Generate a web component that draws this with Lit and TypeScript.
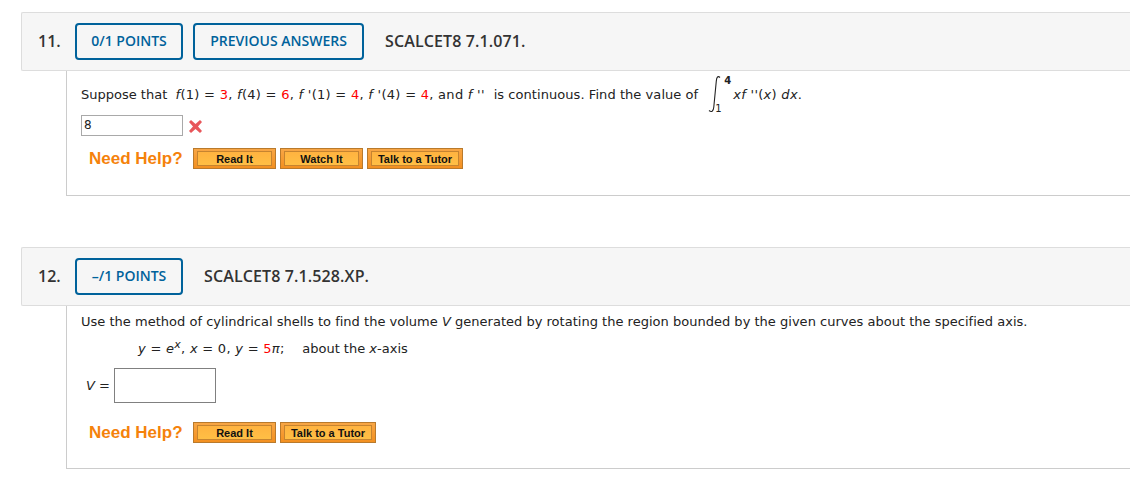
import { LitElement, html, css } from "lit";
import { customElement } from "lit/decorators.js";

const helpBtn = (t: string, w: number) =>
  html`<span class="btn" style="width:${w}px"><span class="btn-in">${t}</span></span>`;

@customElement("app-root")
export class AppRoot extends LitElement {
  static styles = css`
    :host { display: block; width: 1130px; height: 493px; overflow: hidden; background: #fff; font-family: "DejaVu Sans", Verdana, sans-serif; font-size: 13px; color: #222; }
    .page { padding: 12px 0 0 21px; display: flex; flex-direction: column; gap: 51px; }
    .head { height: 59px; box-sizing: border-box; border: 1px solid #ddd; border-right: 0; border-radius: 2px 0 0 2px; background: #f6f6f6; display: flex; align-items: center; font-family: "Open Sans", sans-serif; padding-left: 16px; }
    .num { width: 37px; font-size: 16px; font-weight: 600; color: #333; padding-bottom: 2px; }
    .pill { height: 37px; box-sizing: border-box; border: 2px solid #00629b; border-radius: 4px; display: flex; align-items: center; justify-content: center; color: #00629b; font-size: 14px; font-weight: 600; margin-right: 10px; white-space: nowrap; padding-bottom: 2px; }
    .title { margin-left: 11px; font-size: 16px; font-weight: 600; color: #333; white-space: nowrap; letter-spacing: .12px; padding-bottom: 2px; }
    .body { margin-left: 45px; border-left: 1px solid #ccc; border-bottom: 1px solid #ccc; padding-left: 14px; box-sizing: border-box; }
    .b1 { height: 125px; }
    .b2 { height: 163px; }
    .line { white-space: pre; display: flex; align-items: center; }
    .m { letter-spacing: .28px; }
    .cont { letter-spacing: .06px; }
    i { font-style: italic; }
    .r { color: #f00; }
    .sup { font-size: 11px; position: relative; top: -5px; }
    .int { position: relative; width: 26px; height: 38px; margin-left: 9px; flex: none; }
    .int svg { position: absolute; left: 0; top: 0; }
    .lim { position: absolute; font-size: 10px; font-weight: 700; line-height: 10px; color: #222; }
    .ans { display: flex; align-items: center; }
    .input { box-sizing: border-box; width: 102px; height: 21px; border: 1px solid #a9a9a9; background: #fff; font-size: 12px; line-height: 18px; padding-left: 2px; }
    .x { margin: 2px 0 0 5px; display: block; }
    .help { display: flex; align-items: center; padding-left: 8px; }
    .need { font-family: "Liberation Sans", Arial, sans-serif; font-weight: 700; font-size: 17px; color: #f5820b; width: 104px; white-space: nowrap; }
    .btn { height: 21px; box-sizing: border-box; border: 1px solid #b97a2c; background: linear-gradient(#f8a645, #f39020); padding: 2px 3px; display: block; margin-right: 4px; }
    .btn-in { display: flex; height: 15px; align-items: center; justify-content: center; box-sizing: border-box; border: 1px solid #c68430; background: linear-gradient(#ffb340, #ffbf45); font-family: "Liberation Sans", Arial, sans-serif; font-weight: 700; font-size: 11px; color: #111; white-space: nowrap; }
    .l1 { height: 38px; padding-top: 4px; }
    .a1 { margin-top: 2px; }
    .h1 { margin-top: 12px; }
    .l2 { padding-top: 6px; height: 19px; letter-spacing: .014px; }
    .l3 { padding: 8px 0 0 57px; height: 19px; }
    .a2 { margin-top: 10px; padding-left: 5px; gap: 4px; }
    .input2 { width: 102px; height: 35px; border: 1px solid #808080; box-sizing: border-box; }
    .h2 { margin-top: 19px; }
  `;

  render() {
    return html`<div class="page">
      <section>
        <div class="head">
          <span class="num">11.</span>
          <span class="pill" style="width:108px">0/1 POINTS</span>
          <span class="pill" style="width:171px">PREVIOUS ANSWERS</span>
          <span class="title">SCALCET8 7.1.071.</span>
        </div>
        <div class="body b1">
          <div class="line l1"><span>Suppose that  </span><span class="m"><i>f</i>(1) = <span class="r">3</span>, <i>f</i>(4) = <span class="r">6</span>, <i>f</i> '(1) = <span class="r">4</span>, <i>f</i> '(4) = <span class="r">4</span>, and <i>f</i> ''  </span><span class="cont">is continuous. Find the value of</span><span class="int"><svg width="18" height="38" viewBox="0 0 18 38"><path d="M13 2.5 C11 0.5 9.6 2 9.3 6 L6.8 32 C6.4 36.5 4.5 37.5 2 35.5" fill="none" stroke="#222" stroke-width="1.1"/></svg><span class="lim" style="left:17px;top:1px">4</span><span class="lim" style="left:8px;top:29px;font-weight:400">1</span></span><span class="m"><i>xf</i> ''(<i>x</i>) <i>dx</i>.</span></div>
          <div class="ans a1"><div class="input">8</div><svg class="x" width="15" height="15" viewBox="0 0 15 15"><path d="M1 3 L3 1 L7.5 5 L12 1 L14 3 L10 7.5 L14 12 L12 14 L7.5 10 L3 14 L1 12 L5 7.5 Z" fill="#e8565a"/></svg></div>
          <div class="help h1"><span class="need">Need Help?</span>${helpBtn("Read It", 83)}${helpBtn("Watch It", 83)}${helpBtn("Talk to a Tutor", 96)}</div>
        </div>
      </section>
      <section>
        <div class="head">
          <span class="num">12.</span>
          <span class="pill" style="width:108px">–/1 POINTS</span>
          <span class="title">SCALCET8 7.1.528.XP.</span>
        </div>
        <div class="body b2">
          <div class="line l2">Use the method of cylindrical shells to find the volume <i>V</i> generated by rotating the region bounded by the given curves about the specified axis.</div>
          <div class="line l3"><span class="m"><i>y</i> = <i>e</i><span class="sup"><i>x</i></span>, <i>x</i> = 0, <i>y</i> = <span class="r">5</span><i>π</i>;    </span><span>about the <i>x</i>-axis</span></div>
          <div class="ans a2"><span><i>V</i> =</span><div class="input2"></div></div>
          <div class="help h2"><span class="need">Need Help?</span>${helpBtn("Read It", 83)}${helpBtn("Talk to a Tutor", 96)}</div>
        </div>
      </section>
    </div>`;
  }
}
